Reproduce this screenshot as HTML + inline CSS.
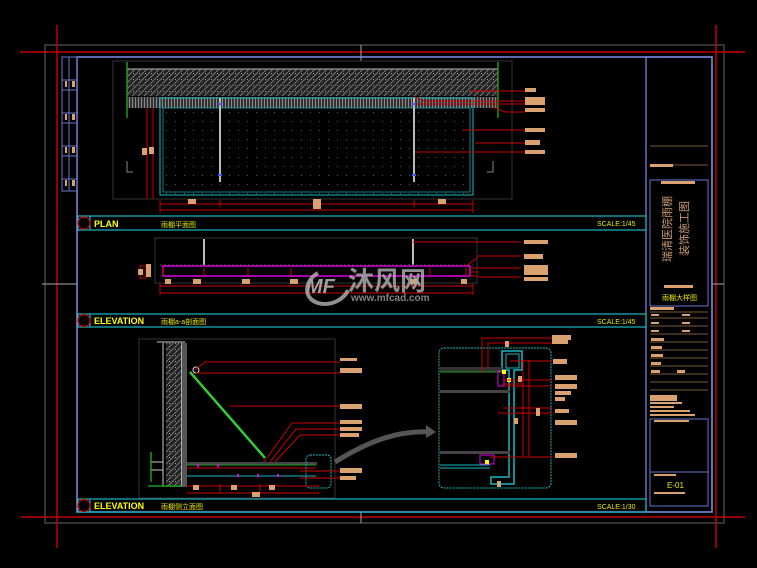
<!DOCTYPE html>
<html><head><meta charset="utf-8"><style>
html,body{margin:0;padding:0;background:#000;width:757px;height:568px;overflow:hidden}
svg{display:block}
text{font-family:"Liberation Sans","Noto Sans CJK SC",sans-serif}
</style></head><body>
<svg width="757" height="568" viewBox="0 0 757 568" xmlns="http://www.w3.org/2000/svg">
<rect width="757" height="568" fill="#000"/>
<!-- outer frames -->
<rect x="45" y="45" width="679" height="478" fill="none" stroke="#444" stroke-width="1.5"/>
<line x1="20" y1="52" x2="745" y2="52" stroke="#c00000" stroke-width="1.5"/>
<line x1="20" y1="517" x2="745" y2="517" stroke="#c00000" stroke-width="1.5"/>
<line x1="57" y1="25" x2="57" y2="548" stroke="#c00000" stroke-width="1.5"/>
<line x1="716" y1="25" x2="716" y2="548" stroke="#c00000" stroke-width="1.5"/>
<line x1="42" y1="284" x2="78" y2="284" stroke="#aaa"/>
<line x1="712" y1="284" x2="724" y2="284" stroke="#aaa"/>
<line x1="361" y1="45" x2="361" y2="61" stroke="#aaa"/>
<line x1="361" y1="512" x2="361" y2="523" stroke="#aaa"/>
<rect x="77" y="57" width="635" height="455" fill="none" stroke="#7a8ee8" stroke-width="1.5"/>
<rect x="646" y="57" width="66" height="455" fill="none" stroke="#7a8ee8" stroke-width="1.2"/>
<!-- left small column -->
<g stroke="#6677cc" fill="none">
<rect x="62" y="57" width="15" height="134"/>
<line x1="69" y1="57" x2="69" y2="191"/>
<line x1="62" y1="80" x2="77" y2="80"/><line x1="62" y1="90" x2="77" y2="90"/>
<line x1="62" y1="113" x2="77" y2="113"/><line x1="62" y1="123" x2="77" y2="123"/>
<line x1="62" y1="146" x2="77" y2="146"/><line x1="62" y1="156" x2="77" y2="156"/>
<line x1="62" y1="179" x2="77" y2="179"/>
</g>
<g fill="#d9a070">
<rect x="65" y="81" width="2" height="6"/><rect x="72" y="81" width="3" height="6"/>
<rect x="65" y="114" width="2" height="6"/><rect x="72" y="114" width="3" height="6"/>
<rect x="65" y="147" width="2" height="6"/><rect x="72" y="147" width="3" height="6"/>
<rect x="65" y="180" width="2" height="6"/><rect x="72" y="180" width="3" height="6"/>
</g>
<!-- title bars -->
<g stroke="#18b8c0" fill="none" stroke-width="1.2">
<rect x="78" y="216" width="568" height="14"/><line x1="90" y1="216" x2="90" y2="230"/>
<rect x="78" y="314" width="568" height="13"/><line x1="90" y1="314" x2="90" y2="327"/>
<rect x="78" y="499" width="568" height="13"/><line x1="90" y1="499" x2="90" y2="512"/>
</g>
<g stroke="#c00" fill="none" stroke-width="1.2">
<circle cx="84" cy="223" r="6"/><circle cx="84" cy="320.5" r="6"/><circle cx="84" cy="505.5" r="6"/>
</g>
<g fill="#ffff00" font-weight="bold" font-size="9">
<text x="94" y="227">PLAN</text>
<text x="94" y="324">ELEVATION</text>
<text x="94" y="509">ELEVATION</text>
</g>
<g fill="#e8e800" font-size="7">
<text x="161" y="227">雨棚平面图</text>
<text x="161" y="324">雨棚a-a剖面图</text>
<text x="161" y="509">雨棚侧立面图</text>
<text x="597" y="226" font-family="Liberation Mono,monospace">SCALE:1/45</text>
<text x="597" y="324" font-family="Liberation Mono,monospace">SCALE:1/45</text>
<text x="597" y="509" font-family="Liberation Mono,monospace">SCALE:1/30</text>
</g>
<!-- PLAN -->
<rect x="113" y="61" width="399" height="138" fill="none" stroke="#333"/>
<defs>
<pattern id="h" width="6" height="6" patternUnits="userSpaceOnUse">
<rect width="6" height="6" fill="#222"/><path d="M0 6L6 0" stroke="#777" stroke-width="1"/><rect x="1" y="1" width="1" height="1" fill="#999"/>
</pattern>
<pattern id="g" width="3" height="4" patternUnits="userSpaceOnUse"><rect width="3" height="4" fill="#333"/><rect width="1" height="4" fill="#888"/></pattern>
<pattern id="d" width="9" height="9" patternUnits="userSpaceOnUse"><rect x="4" y="4" width="1" height="1" fill="#555"/></pattern>
</defs>
<rect x="127" y="69" width="371" height="27" fill="url(#h)"/>
<line x1="127" y1="69" x2="498" y2="69" stroke="#bbb"/>
<rect x="127" y="97" width="371" height="11" fill="url(#g)"/>
<rect x="163" y="108" width="307" height="86" fill="url(#d)"/>
<line x1="127" y1="62" x2="127" y2="118" stroke="#1a9a1a" stroke-width="1.5"/>
<line x1="498" y1="62" x2="498" y2="118" stroke="#1a9a1a" stroke-width="1.5"/>
<rect x="160" y="98" width="313" height="97" fill="none" stroke="#18b8c0"/>
<rect x="163" y="108" width="307" height="84" fill="none" stroke="#18b8c0" stroke-width=".7"/>
<g stroke="#bbb" stroke-width="2"><line x1="220" y1="98" x2="220" y2="182"/><line x1="414" y1="98" x2="414" y2="182"/></g>
<g fill="#4455ff"><rect x="218" y="103" width="4" height="2"/><rect x="412" y="103" width="4" height="2"/><rect x="218" y="174" width="4" height="2"/><rect x="412" y="174" width="4" height="2"/></g>
<g stroke="#c00" fill="none">
<path d="M147 108V199M153 108V199"/>
<path d="M160 204H473M160 210H473M160 200V213M220 200V207M414 200V207M473 200V213"/>
<path d="M415 97L425 101H525M417 104H525M493 107L505 112H525M470 91H525M463 130H525M475 143H525M415 152H525"/>
</g>
<g fill="#d9a070">
<rect x="142" y="148" width="5" height="7"/><rect x="149" y="147" width="5" height="7"/>
<rect x="188" y="199" width="8" height="5"/><rect x="313" y="199" width="8" height="10"/><rect x="438" y="199" width="8" height="5"/>
<rect x="525" y="88" width="11" height="4"/><rect x="525" y="97" width="20" height="8"/><rect x="525" y="108" width="20" height="4"/>
<rect x="525" y="128" width="20" height="4"/><rect x="525" y="140" width="15" height="5"/><rect x="525" y="150" width="20" height="4"/>
</g>
<g stroke="#888" fill="none"><path d="M127 161V172H133M493 161V172H487"/></g>
<!-- ELEVATION a-a -->
<rect x="155" y="238" width="322" height="45" fill="none" stroke="#333"/>
<g stroke="#bbb" stroke-width="2"><line x1="204" y1="239" x2="204" y2="265"/><line x1="413" y1="239" x2="413" y2="265"/></g>
<rect x="163" y="266" width="307" height="10" fill="none" stroke="#e000e0" stroke-width="1.5"/>
<line x1="160" y1="265" x2="473" y2="265" stroke="#444" stroke-dasharray="2,2"/>
<g stroke="#c00" fill="none">
<path d="M160 286H473M160 293H473M160 283V295M473 283V295M163 268V276M204 268V276M248 268V276M291 268V276M430 268V276M466 268V276"/>
<path d="M413 242H478M466 266L478 257H478M470 268H478M470 272H478M470 276H478"/>
<path d="M478 242H521M478 256H521M478 268H521M478 277H521"/>
<rect x="140" y="266" width="6" height="12"/>
</g>
<g fill="#d9a070">
<rect x="138" y="269" width="5" height="6"/><rect x="146" y="264" width="5" height="13"/>
<rect x="165" y="279" width="6" height="5"/><rect x="193" y="279" width="8" height="5"/><rect x="242" y="279" width="8" height="5"/><rect x="290" y="279" width="8" height="5"/><rect x="410" y="279" width="8" height="5"/><rect x="461" y="279" width="6" height="5"/>
<rect x="524" y="240" width="24" height="4"/><rect x="524" y="254" width="19" height="5"/><rect x="524" y="265" width="24" height="10"/><rect x="524" y="277" width="24" height="4"/>
</g>
<!-- watermark -->
<g opacity=".85">
<path d="M318 273C305 280 302 298 318 303C332 307 345 298 348 290" fill="none" stroke="#aaa" stroke-width="4"/>
<text x="306" y="293" fill="#bbb" font-size="20" font-weight="bold" font-style="italic">MF</text>
<text x="348" y="290" fill="#aaa" font-size="26" font-weight="bold">沐风网</text>
<text x="351" y="301" fill="#999" font-size="10" font-weight="bold">www.mfcad.com</text>
</g>
<!-- bottom left elevation -->
<rect x="139" y="339" width="196" height="159" fill="none" stroke="#333"/>
<rect x="166" y="343" width="16" height="144" fill="url(#h)"/>
<line x1="163" y1="343" x2="163" y2="487" stroke="#ccc"/><line x1="182" y1="343" x2="182" y2="487" stroke="#ccc" stroke-width="1.5"/>
<rect x="182" y="343" width="5" height="144" fill="#555"/>
<line x1="157" y1="342" x2="185" y2="342" stroke="#ccc"/>
<path d="M150 462H163M150 470H163" stroke="#ccc"/>
<line x1="151" y1="452" x2="151" y2="482" stroke="#1a9a1a" stroke-width="1.5"/>
<line x1="148" y1="486" x2="182" y2="486" stroke="#1a9a1a" stroke-width="1.5"/>
<line x1="190" y1="372" x2="265" y2="458" stroke="#33cc33" stroke-width="2.5"/>
<circle cx="196" cy="370" r="3" fill="none" stroke="#ddd"/>
<rect x="187" y="462" width="130" height="3" fill="#444"/>
<line x1="187" y1="465" x2="316" y2="465" stroke="#1a9a1a"/>
<line x1="187" y1="476" x2="316" y2="476" stroke="#18b8c0"/>
<line x1="187" y1="468" x2="316" y2="468" stroke="#c00"/>
<g fill="#e000e0"><rect x="197" y="464" width="2" height="3"/><rect x="217" y="464" width="2" height="3"/><rect x="237" y="474" width="2" height="3"/><rect x="257" y="474" width="2" height="3"/><rect x="277" y="474" width="2" height="3"/></g>
<rect x="306" y="455" width="25" height="33" rx="4" fill="none" stroke="#18b8c0" stroke-dasharray="2,1"/>
<path d="M335 462C370 440 400 430 432 432" fill="none" stroke="#555" stroke-width="5"/>
<path d="M426 425L436 432L426 438" fill="#555"/>
<g stroke="#c00" fill="none">
<path d="M195 370L205 362H340M196 373H340M230 406H340M264 462L292 423H340M270 462L296 429H340M275 462L300 435H340M300 471H340M300 478H340"/>
<path d="M187 486H320M187 493H320M220 484V493M260 484V493"/>
</g>
<g fill="#d9a070">
<rect x="340" y="358" width="17" height="3"/><rect x="340" y="368" width="22" height="5"/><rect x="340" y="404" width="22" height="5"/>
<rect x="340" y="420" width="22" height="4"/><rect x="340" y="427" width="22" height="4"/><rect x="340" y="433" width="19" height="4"/>
<rect x="340" y="468" width="22" height="5"/><rect x="340" y="476" width="16" height="4"/>
<rect x="193" y="485" width="6" height="5"/><rect x="231" y="485" width="6" height="5"/><rect x="269" y="485" width="6" height="5"/><rect x="252" y="492" width="8" height="5"/>
</g>
<!-- detail right -->
<rect x="439" y="348" width="112" height="140" rx="5" fill="none" stroke="#18b8c0" stroke-dasharray="2,1"/>
<path d="M502 351H522V370H514V484H491V477H509V370H502Z" fill="none" stroke="#18b8c0" stroke-width="1.5"/>
<rect x="506" y="354" width="13" height="14" fill="none" stroke="#18b8c0"/>
<rect x="440" y="367" width="62" height="5" fill="#333"/><line x1="440" y1="372" x2="502" y2="372" stroke="#1a9a1a"/>
<rect x="440" y="390" width="70" height="3" fill="#444"/>
<rect x="440" y="451" width="70" height="3" fill="#444"/>
<line x1="440" y1="465" x2="490" y2="465" stroke="#18b8c0"/><line x1="440" y1="468" x2="490" y2="468" stroke="#18b8c0"/>
<rect x="498" y="371" width="6" height="15" fill="none" stroke="#e000e0"/>
<rect x="480" y="455" width="14" height="9" fill="none" stroke="#e000e0"/>
<g fill="#ffff00"><rect x="502" y="370" width="4" height="4"/><rect x="507" y="378" width="4" height="4"/><rect x="485" y="460" width="4" height="4"/></g>
<g stroke="#c00" fill="none">
<path d="M482 373V338H552M488 368V343H552M510 361H552M504 380H552M505 386H552M503 408H552M498 413H552M490 457H552"/>
<path d="M523 360V456M529 360V456M503 384H523"/>
</g>
<g fill="#d9a070">
<rect x="552" y="335" width="19" height="5"/><rect x="552" y="340" width="16" height="4"/><rect x="553" y="359" width="14" height="5"/>
<rect x="555" y="375" width="22" height="5"/><rect x="555" y="384" width="22" height="5"/><rect x="555" y="391" width="16" height="4"/><rect x="555" y="397" width="10" height="4"/>
<rect x="555" y="409" width="14" height="4"/><rect x="555" y="420" width="22" height="5"/><rect x="555" y="453" width="22" height="5"/>
<rect x="505" y="341" width="4" height="6"/><rect x="518" y="376" width="4" height="6"/><rect x="536" y="408" width="4" height="8"/><rect x="514" y="418" width="4" height="6"/><rect x="497" y="481" width="4" height="6"/>
</g>
<!-- title block -->
<g stroke="#7a5a3a" fill="none">
<path d="M650 146H708M650 165H708M650 312H708M650 318H708M650 326H708M650 334H708M650 342H708M650 350H708M650 358H708M650 366H708M650 374H708M650 382H708M650 390H708"/>
</g>
<g stroke="#6677cc" fill="none">
<rect x="650" y="180" width="58" height="126"/>
<rect x="650" y="419" width="58" height="87"/>
<line x1="650" y1="472" x2="708" y2="472"/>
</g>
<g fill="#d9a070">
<rect x="650" y="164" width="23" height="3"/><rect x="661" y="181" width="34" height="3"/><rect x="664" y="285" width="29" height="3"/>
<rect x="650" y="307" width="24" height="3"/>
<rect x="651" y="314" width="8" height="2"/><rect x="682" y="314" width="8" height="2"/>
<rect x="651" y="322" width="8" height="2"/><rect x="682" y="322" width="8" height="2"/>
<rect x="651" y="330" width="8" height="2"/><rect x="682" y="330" width="8" height="2"/>
<rect x="651" y="338" width="13" height="3"/><rect x="651" y="346" width="11" height="3"/><rect x="651" y="354" width="12" height="3"/><rect x="651" y="362" width="10" height="3"/><rect x="651" y="370" width="9" height="3"/><rect x="677" y="370" width="8" height="3"/>
<rect x="650" y="395" width="27" height="6"/><rect x="650" y="402" width="32" height="2"/><rect x="650" y="406" width="24" height="2"/>
<rect x="650" y="410" width="40" height="2"/><rect x="650" y="414" width="45" height="2"/>
<rect x="654" y="420" width="35" height="2"/><rect x="654" y="474" width="22" height="2"/><rect x="654" y="492" width="31" height="2"/>
</g>
<g fill="#c89a6e" font-size="11">
<text transform="translate(671,262) rotate(-90)">瑞清医院雨棚</text>
<text transform="translate(688,256) rotate(-90)">装饰施工图</text>
</g>
<text x="662" y="300" fill="#e8e800" font-size="7">雨棚大样图</text>
<text x="667" y="488" fill="#e8e800" font-size="8" font-family="Liberation Mono,monospace">E-01</text>
</svg>
</body></html>
